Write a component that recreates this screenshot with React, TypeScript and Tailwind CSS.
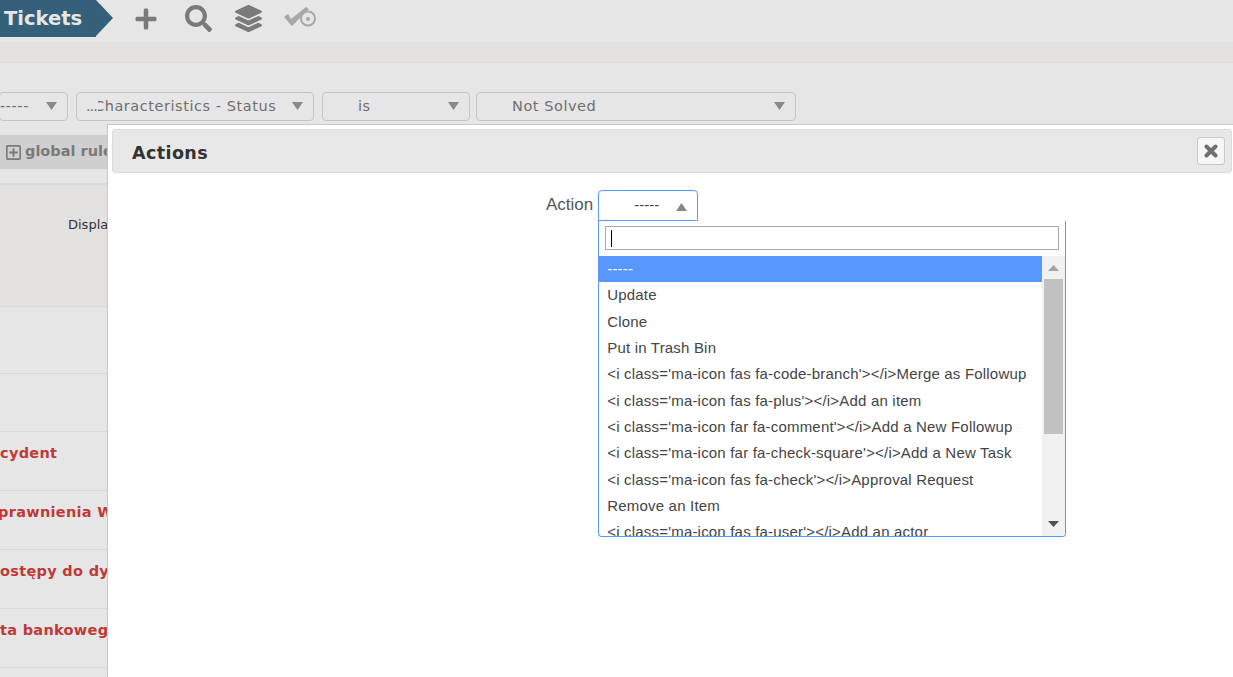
import { FaPlus, FaSearch, FaLayerGroup, FaRegPlusSquare } from 'react-icons/fa';

const filters = [
  { label: '-----', w: 'w-[69px]', text: 'pl-0' },
  { label: 'Characteristics - Status', w: 'w-[238px]', text: '' },
  { label: 'is', w: 'w-[148px]', text: 'pl-[35px]' },
  { label: 'Not Solved', w: 'w-[320px]', text: 'pl-[35px]' },
];

const options = [
  'Update',
  'Clone',
  'Put in Trash Bin',
  "<i class='ma-icon fas fa-code-branch'></i>Merge as Followup",
  "<i class='ma-icon fas fa-plus'></i>Add an item",
  "<i class='ma-icon far fa-comment'></i>Add a New Followup",
  "<i class='ma-icon far fa-check-square'></i>Add a New Task",
  "<i class='ma-icon fas fa-check'></i>Approval Request",
  'Remove an Item',
  "<i class='ma-icon fas fa-user'></i>Add an actor",
];

const rows = [
  { h: 'h-[67px]', label: '', ml: '' },
  { h: 'h-[58px]', label: '', ml: '' },
  { h: 'h-[59px]', label: 'cydent', ml: '' },
  { h: 'h-[59px]', label: 'prawnienia W', ml: '-ml-[2px]' },
  { h: 'h-[59px]', label: 'ostępy do dy', ml: '' },
  { h: 'h-[59px]', label: 'ta bankoweg', ml: '' },
  { h: 'h-[59px]', label: '', ml: '' },
];

function Arrow({ up = false, className = '' }: { up?: boolean; className?: string }) {
  return (
    <svg viewBox="0 0 12 8" preserveAspectRatio="none" className={className}>
      <path d={up ? 'M6 0 L12 8 L0 8 Z' : 'M0 0 L12 0 L6 8 Z'} fill="currentColor" />
    </svg>
  );
}

function CheckClock() {
  return (
    <svg width="34" height="24" viewBox="0 0 34 24" className="text-[#a8a8a8]">
      <path d="M1 10 L5 7 L8 12 L23 0 L26 2 L9 19 Z" fill="currentColor" />
      <circle cx="25" cy="11.5" r="7" fill="#e6e6e6" stroke="currentColor" strokeWidth="2" />
      <circle cx="25" cy="12" r="2" fill="currentColor" />
    </svg>
  );
}

export default function App() {
  return (
    <div className="relative h-[677px] w-full overflow-hidden bg-[#e6e6e6] font-['DejaVu_Sans',sans-serif]">
      {/* page behind the dialog */}
      <div className="flex h-[42px] items-start">
        <div className="flex h-[37px] w-[96px] items-center bg-[#34607a] pl-1 text-[19.5px] font-bold text-[#e6e6e6]">Tickets</div>
        <div className="h-0 w-0 border-y-[18.5px] border-l-[17px] border-y-transparent border-l-[#34607a]" />
        <div className="ml-[21px] flex h-[37px] items-center text-[#7a7a7a]">
          <FaPlus size={24} />
          <FaSearch size={27} className="ml-[27px]" />
          <FaLayerGroup size={27} className="ml-[23px]" />
          <div className="ml-[21px]"><CheckClock /></div>
        </div>
      </div>
      <div className="h-[21px] border-b border-[#dcdcdc] bg-[#e2e1df]" />
      <div className="-ml-px flex h-[72px] items-start gap-2 pt-[29px]">
        {filters.map((f) => (
          <div key={f.label} className={`relative flex h-[29px] items-center rounded-[4px] border border-[#c4c4c4] pt-px text-[14.5px] tracking-[0.55px] text-[#6f6f6f] last:-ml-[2px] ${f.w}`}>
            {f.text === '' ? (
              <>
                <span className="ml-[9px] w-[12px] shrink-0 tracking-[-1px]">...</span>
                <span className="w-[181px] overflow-hidden whitespace-nowrap">
                  <span className="-ml-[4px] block">{f.label}</span>
                </span>
              </>
            ) : (
              <span className={f.text}>{f.label}</span>
            )}
            <Arrow className="absolute right-[10px] top-[9px] h-[8px] w-[11px] text-[#8a8a8a]" />
          </div>
        ))}
      </div>
      <div className="flex h-[34px] items-center gap-[3px] bg-[#cfcfcf] pl-[5px] text-[14.5px] font-bold text-[#7a7a7a]">
        <FaRegPlusSquare size={17} />
        <span>global rule</span>
      </div>
      <div className="h-[16px] border-b-[2px] border-[#d8d8d8]" />
      <div className="relative h-[122px] border-b border-[#d8d8d8] bg-[#e2e1df]">
        <span className="absolute left-[68px] top-[30px] text-[13px] text-[#333]">Display</span>
      </div>
      {rows.map((r, i) => (
        <div key={i} className={`flex items-start border-b border-[#d8d8d8] pt-[11px] text-[14.5px] font-bold tracking-[0.3px] text-[#bf3a36] ${r.h} ${r.ml}`}>
          {r.label}
        </div>
      ))}

      {/* dialog */}
      <div className="absolute bottom-0 left-[107px] right-0 top-[124px] border-l border-t border-[#c8c8c8] bg-white pl-1 pr-px pt-1">
        <div className="flex h-[44px] items-center justify-between rounded-[3px] border border-[#dcdcdc] bg-[#e8e8e8] pl-[19px] pr-[6px]">
          <span className="pt-[4px] text-[17.5px] font-bold tracking-[0.4px] text-[#333]">Actions</span>
          <button className="flex h-[28px] w-[28px] items-center justify-center rounded-[3px] border border-[#c9c9c9] bg-[#f6f6f6] text-[#6f6f6f]">
            <svg width="14" height="14" viewBox="0 0 14 14">
              <path d="M2.5 2.5 L11.5 11.5 M11.5 2.5 L2.5 11.5" stroke="currentColor" strokeWidth="4" strokeLinecap="round" />
            </svg>
          </button>
        </div>
        <div className="flex items-start pl-[434px] pt-[17px] font-['Liberation_Sans',sans-serif]">
          <span className="mr-[5px] pt-[5px] text-[17px] leading-[20px] text-[#555]">Action</span>
          <div className="relative h-[31px] w-[100px] rounded-t-[4px] border border-[#5897fb] bg-white">
            <span className="absolute left-[35px] top-[4px] text-[15px] leading-[20px] text-[#444]">-----</span>
            <Arrow up className="absolute left-[77px] top-[12px] h-[8px] w-[11px] text-[#888]" />
            <div className="absolute left-[-1px] top-[30px] z-10 h-[316px] w-[468px] overflow-hidden rounded-b-[4px] border border-t-0 border-[#5897fb] bg-white">
              <div className="px-[6px] pt-[5px]">
                <div className="flex h-[24px] items-center border border-[#aaa] pl-[5px]">
                  <span className="h-[17px] w-px bg-black" />
                </div>
              </div>
              <div className="mt-[6px] flex">
                <ul className="w-[443px] text-[15px] tracking-[0.19px] text-[#444]">
                  <li className="flex h-[26.35px] items-center bg-[#5897fb] pl-[8px] text-white">-----</li>
                  {options.map((o) => (
                    <li key={o} className="flex h-[26.35px] items-center whitespace-nowrap pl-[8px]">{o}</li>
                  ))}
                </ul>
                <div className="flex h-[280px] w-[23px] flex-col items-center bg-[#f1f1f1]">
                  <Arrow up className="mt-[9px] h-[6px] w-[11px] shrink-0 text-[#a3a3a3]" />
                  <div className="mt-[8px] h-[155px] w-[19px] shrink-0 bg-[#c1c1c1]" />
                  <Arrow className="mt-[87px] h-[6px] w-[11px] shrink-0 text-[#505050]" />
                </div>
              </div>
            </div>
          </div>
        </div>
      </div>
    </div>
  );
}
